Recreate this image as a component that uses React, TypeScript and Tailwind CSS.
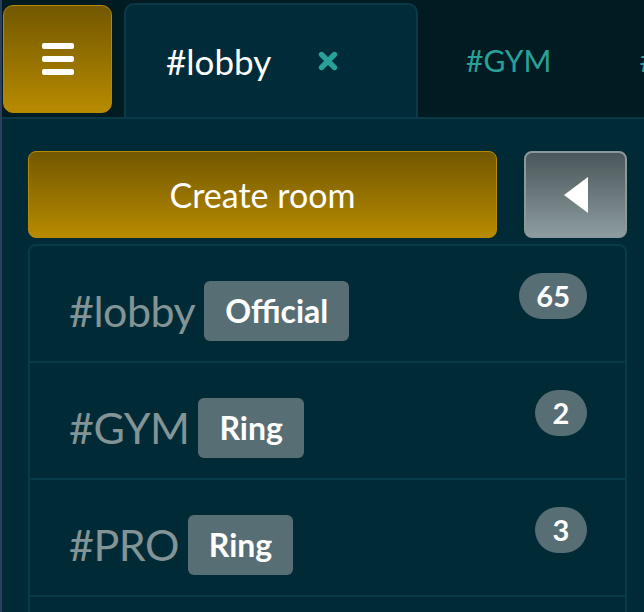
import React from "react";
import { X } from "lucide-react";

type Room = {
  name: string;
  tag: string;
  count: number;
};

const rooms: Room[] = [
  { name: "#lobby", tag: "Official", count: 65 },
  { name: "#GYM", tag: "Ring", count: 2 },
  { name: "#PRO", tag: "Ring", count: 3 },
];

const font = { fontFamily: "Lato, 'Noto Sans', sans-serif" };

export default function App() {
  return (
    <div className="flex h-[612px] w-[644px] overflow-hidden bg-[#2e3f5c]" style={font}>
      <div className="w-[2px] shrink-0" />
      <div className="flex min-w-0 flex-1 flex-col bg-[#002b36]">
        <div className="flex h-[119px] shrink-0 items-start gap-[12px] overflow-hidden border-b-2 border-[#0a3a47] bg-[#011b23] pl-[1px] pt-[3px]">
          <button className="mt-[2px] flex h-[108px] w-[109px] shrink-0 items-center justify-center rounded-[10px] border border-[#b58900] bg-gradient-to-b from-[#735800] to-[#b88b00]">
            <div className="flex flex-col gap-[7px]">
              <span className="block h-[6px] w-[32px] rounded-[2px] bg-white" />
              <span className="block h-[6px] w-[32px] rounded-[2px] bg-white" />
              <span className="block h-[6px] w-[32px] rounded-[2px] bg-white" />
            </div>
          </button>
          <div className="flex h-[114px] w-[294px] shrink-0 items-center gap-[44px] rounded-t-[10px] border-2 border-b-0 border-[#0a3a47] bg-[#002b39] pl-[40px]">
            <span className="text-[35px] text-white">#lobby</span>
            <X size={26} strokeWidth={5} color="#2aa198" />
          </div>
          <div className="flex h-[114px] shrink-0 items-center gap-[88px] pl-[36px]">
            <span className="text-[30px] text-[#2aa198]">#GYM</span>
            <span className="text-[30px] text-[#2aa198]">#PRO</span>
          </div>
        </div>

        <div className="flex flex-col pl-[26px] pr-[17px] pt-[32px]">
          <div className="flex gap-[27px]">
            <button className="flex h-[87px] flex-1 items-center justify-center rounded-[8px] border border-[#b58900] bg-gradient-to-b from-[#735800] to-[#b88b00] text-[34px] text-white">
              Create room
            </button>
            <button className="flex h-[87px] w-[103px] shrink-0 items-center justify-center rounded-[8px] border-2 border-[#8a9a9c] bg-gradient-to-b from-[#4b585b] to-[#8d9c9e]">
              <svg width="24" height="36" viewBox="0 0 24 36">
                <path d="M24 0 L0 18 L24 36 Z" fill="white" />
              </svg>
            </button>
          </div>

          <ul className="mt-[6px] flex flex-col rounded-t-[8px] border-2 border-b-0 border-[#073b48]">
            {rooms.map((room) => (
              <li
                key={room.name}
                className="flex h-[117px] shrink-0 items-start justify-between border-b-2 border-[#073b48] pl-[39px] pr-[38px] pt-[27px]"
              >
                <div className="mt-[8px] flex items-center gap-[9px]">
                  <span className="text-[43px] leading-[60px] tracking-[-0.5px] text-[#839496]">{room.name}</span>
                  <span className="flex h-[60px] items-center rounded-[6px] bg-[#586e75] px-[21px] text-[32px] font-bold text-white">
                    {room.tag}
                  </span>
                </div>
                <span className="flex h-[46px] min-w-[52px] items-center justify-center rounded-full bg-[#586e75] px-[17px] text-[29px] font-bold text-white">
                  {room.count}
                </span>
              </li>
            ))}
            <li className="h-[117px] shrink-0" />
          </ul>
        </div>
      </div>
    </div>
  );
}
